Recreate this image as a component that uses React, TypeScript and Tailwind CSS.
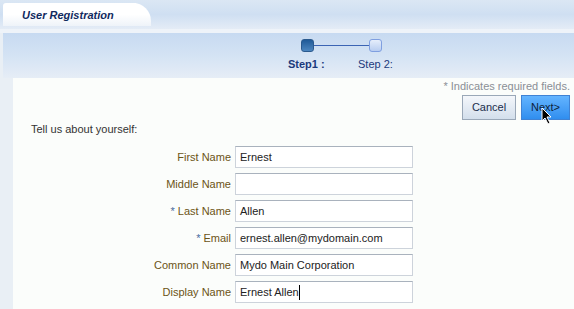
import React from "react";

const fields = [
  { label: "First Name", value: "Ernest", req: false },
  { label: "Middle Name", value: "", req: false },
  { label: "Last Name", value: "Allen", req: true },
  { label: "Email", value: "ernest.allen@mydomain.com", req: true },
  { label: "Common Name", value: "Mydo Main Corporation", req: false },
  { label: "Display Name", value: "Ernest Allen", req: false, caret: true },
];

export default function App() {
  return (
    <div className="relative w-[574px] h-[309px] overflow-hidden bg-[#e9eff5] text-[11px] font-['Liberation_Sans',Arial,sans-serif]">
      {/* header tabs */}
      <div className="h-[29px] bg-gradient-to-b from-[#dbe7f4] via-[#cfdff2] to-[#e4ecf6] pt-[3px] pl-[3px]">
        <div className="relative w-[133px] h-[23px] rounded-tl-[3px] bg-gradient-to-b from-white via-white to-[#eef3f9] pl-[19px] pt-[4px]">
          <span className="relative z-10 font-bold italic text-[#102a5e] text-[11px]">User Registration</span>
          <div className="absolute right-[-15px] top-0 w-[30px] h-[23px] rounded-tr-[18px] bg-gradient-to-b from-white via-white to-[#eef3f9]" />
        </div>
      </div>
      <div className="h-[4px] bg-[#eef3f9]" />

      {/* train */}
      <div className="ml-[3px] h-[45px] bg-gradient-to-b from-[#c7daf1] via-[#d4e3f4] to-[#e6edf6] pl-[285px] pt-[6px]">
        <div className="flex items-center pl-[13px]">
          <div className="w-[13px] h-[13px] rounded-[3px] border border-[#2b5a8e] bg-gradient-to-b from-[#1f5a98] to-[#4c86bf]" />
          <div className="w-[55px] h-[1px] bg-[#3b64b4]" />
          <div className="w-[13px] h-[13px] rounded-[3px] border border-[#7f9fe0] bg-gradient-to-b from-[#e6eefb] to-[#b8cdf0]" />
        </div>
        <div className="flex mt-[4px] text-[#1b3a7c] text-[11px]">
          <span className="w-[70px] font-bold">Step1 :</span>
          <span>Step 2:</span>
        </div>
      </div>

      {/* content */}
      <div className="ml-[13px] bg-[#fbfdfb] h-full pt-[1px] pr-[4px]">
        <div className="text-right text-[11px] text-[#8a8f96] leading-[13px] mt-[1px]">* Indicates required fields.</div>
        <div className="flex justify-end gap-[5px] mt-[2px]">
          <button className="w-[54px] h-[25px] border border-[#9aa8b8] bg-gradient-to-b from-[#f4f7fb] to-[#d3dfec] text-[#1b2e4c] text-[11px]">Cancel</button>
          <button className="w-[49px] h-[25px] border border-[#3f82d4] bg-gradient-to-b from-[#63b4ff] to-[#2f8eef] text-[#0e1e38] text-[11px]">Next&gt;</button>
        </div>
        <div className="ml-[18px] mt-[3px] text-[#333] text-[11px] leading-[13px]">Tell us about yourself:</div>
        <div className="mt-[10px] flex flex-col gap-[5px]">
          {fields.map((f) => (
            <div key={f.label} className="flex items-center h-[22px] gap-[4px]">
              <div className="w-[218px] text-right text-[#6b5416] text-[11px]">
                {f.req && <span className="text-[#4a6c9e] mr-[3px]">*</span>}
                {f.label}
              </div>
              <div className="w-[178px] h-[22px] border border-[#cdd3db] border-t-[#a9b2bd] bg-white flex items-center pl-[4px] text-[#222] text-[11px]">
                {f.value}
                {f.caret && <span className="inline-block w-[1px] h-[15px] bg-black" />}
              </div>
            </div>
          ))}
        </div>
      </div>

      {/* mouse cursor */}
      <svg className="absolute left-[541px] top-[107px]" width="12" height="18" viewBox="0 0 12 18">
        <path d="M1 1 L1 14 L4 11 L7 17 L9 16 L6 10 L10 10 Z" fill="black" stroke="white" strokeWidth="1" />
      </svg>
    </div>
  );
}
